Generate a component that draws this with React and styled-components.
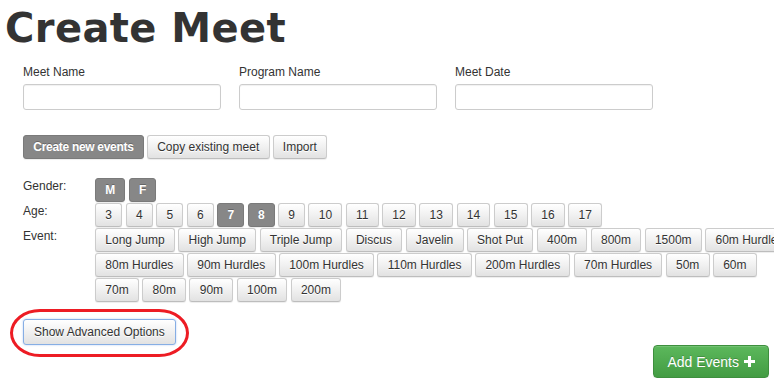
import React from "react";
import styled, { createGlobalStyle, css } from "styled-components";

const GENDERS = [
  { label: "M", active: true },
  { label: "F", active: true },
];

const AGES = [3, 4, 5, 6, 7, 8, 9, 10, 11, 12, 13, 14, 15, 16, 17];
const ACTIVE_AGES = [7, 8];

const EVENTS = [
  "Long Jump", "High Jump", "Triple Jump", "Discus", "Javelin", "Shot Put",
  "400m", "800m", "1500m", "60m Hurdles", "80m Hurdles", "90m Hurdles",
  "100m Hurdles", "110m Hurdles", "200m Hurdles", "70m Hurdles", "50m",
  "60m", "70m", "80m", "90m", "100m", "200m",
];

const GlobalStyle = createGlobalStyle`
  html, body {
    margin: 0;
    padding: 0;
    overflow: hidden;
    background: #fff;
  }
  body {
    font-family: "Liberation Sans", Arial, sans-serif;
    font-size: 12px;
    color: #333;
  }
`;

const PlusIcon = () => (
  <svg width="11" height="11" viewBox="0 0 11 11" aria-hidden="true">
    <path d="M4 0h3v4h4v3H7v4H4V7H0V4h4z" fill="#fff" />
  </svg>
);

export default function App() {
  return (
    <Page>
      <GlobalStyle />
      <Title>Create Meet</Title>
      <Form>
        <Fields>
          <Field>
            <FieldLabel>Meet Name</FieldLabel>
            <Input type="text" />
          </Field>
          <Field>
            <FieldLabel>Program Name</FieldLabel>
            <Input type="text" />
          </Field>
          <Field>
            <FieldLabel>Meet Date</FieldLabel>
            <Input type="text" />
          </Field>
        </Fields>

        <Toolbar>
          <Button $active>Create new events</Button>
          <Button>Copy existing meet</Button>
          <Button>Import</Button>
        </Toolbar>

        <Options>
          <OptionLabel>Gender:</OptionLabel>
          <ButtonWrap>
            {GENDERS.map((g) => (
              <Button key={g.label} $active={g.active}>{g.label}</Button>
            ))}
          </ButtonWrap>
          <OptionLabel>Age:</OptionLabel>
          <ButtonWrap>
            {AGES.map((a) => (
              <Button key={a} $active={ACTIVE_AGES.includes(a)}>{a}</Button>
            ))}
          </ButtonWrap>
          <OptionLabel>Event:</OptionLabel>
          <ButtonWrap>
            {EVENTS.map((e) => (
              <Button key={e}>{e}</Button>
            ))}
          </ButtonWrap>
        </Options>

        <Advanced>
          <AdvancedButton>Show Advanced Options</AdvancedButton>
          <Highlight />
        </Advanced>
      </Form>

      <Footer>
        <AddButton>
          Add Events <PlusIcon />
        </AddButton>
      </Footer>
    </Page>
  );
}

const Page = styled.div`
  width: 774px;
  padding-top: 8px;
`;

const Title = styled.h1`
  margin: 0 0 0 5px;
  font-family: "DejaVu Sans", "Liberation Sans", sans-serif;
  font-weight: bold;
  font-size: 40px;
  line-height: 40px;
  letter-spacing: 0.4px;
  color: #333;
`;

const Form = styled.div`
  padding-left: 23px;
  margin-top: 16px;
`;

const Fields = styled.div`
  display: grid;
  grid-template-columns: repeat(3, 198px);
  column-gap: 18px;
`;

const Field = styled.label`
  display: flex;
  flex-direction: column;
  gap: 3px;
`;

const FieldLabel = styled.span`
  line-height: 17px;
  color: #333;
`;

const Input = styled.input`
  box-sizing: border-box;
  width: 198px;
  height: 26px;
  border: 1px solid #ccc;
  border-radius: 3px;
  box-shadow: inset 0 1px 1px rgba(0, 0, 0, 0.06);
  background: #fff;
  outline: none;
`;

const Toolbar = styled.div`
  display: flex;
  gap: 3px;
  margin-top: 25px;
`;

const Button = styled.button`
  box-sizing: border-box;
  height: 24px;
  padding: 2px 9.3px;
  font-family: "Liberation Sans", Arial, sans-serif;
  font-size: 12px;
  line-height: 18px;
  color: #333;
  white-space: nowrap;
  background: linear-gradient(to bottom, #fff 0%, #e2e2e2 100%);
  border: 1px solid #ccc;
  border-bottom-color: #bdbdbd;
  border-radius: 3px;
  text-shadow: 0 1px 0 #fff;
  box-shadow: 0 1px 1px rgba(0, 0, 0, 0.075);
  cursor: pointer;

  ${(p) =>
    p.$active &&
    css`
      background: #878787;
      border-color: #7a7a7a;
      color: #fff;
      font-weight: bold;
      letter-spacing: -0.3px;
      text-shadow: 0 -1px 0 rgba(0, 0, 0, 0.25);
    `}
`;

const Options = styled.div`
  display: grid;
  grid-template-columns: 72px 703px;
  row-gap: 1px;
  margin-top: 19px;
`;

const OptionLabel = styled.div`
  line-height: 17px;
  color: #333;
`;

const ButtonWrap = styled.div`
  display: flex;
  flex-wrap: wrap;
  gap: 1px 3.3px;
`;

const Advanced = styled.div`
  position: relative;
  margin-top: 17px;
  width: fit-content;
`;

const AdvancedButton = styled(Button)`
  height: 26px;
  padding: 3px 10px;
  border-color: #86aee4;
  box-shadow: 0 0 2px rgba(102, 150, 233, 0.5);
`;

const Highlight = styled.span`
  position: absolute;
  left: -13px;
  right: -13px;
  top: -10px;
  bottom: -12px;
  border: 3px solid #ed1c24;
  border-radius: 30px / 24px;
  pointer-events: none;
`;

const Footer = styled.div`
  display: flex;
  justify-content: flex-end;
  padding-right: 5px;
`;

const AddButton = styled.button`
  display: flex;
  align-items: center;
  gap: 5px;
  box-sizing: border-box;
  height: 33px;
  padding: 6px 13px;
  font-family: "Liberation Sans", Arial, sans-serif;
  font-size: 14px;
  line-height: 20px;
  color: #fff;
  background: linear-gradient(to bottom, #5cb85c 0%, #439c43 100%);
  border: 1px solid #3e8f3e;
  border-radius: 4px;
  text-shadow: 0 -1px 0 rgba(0, 0, 0, 0.2);
  box-shadow: inset 0 1px 0 rgba(255, 255, 255, 0.15), 0 1px 1px rgba(0, 0, 0, 0.075);
  cursor: pointer;
`;
